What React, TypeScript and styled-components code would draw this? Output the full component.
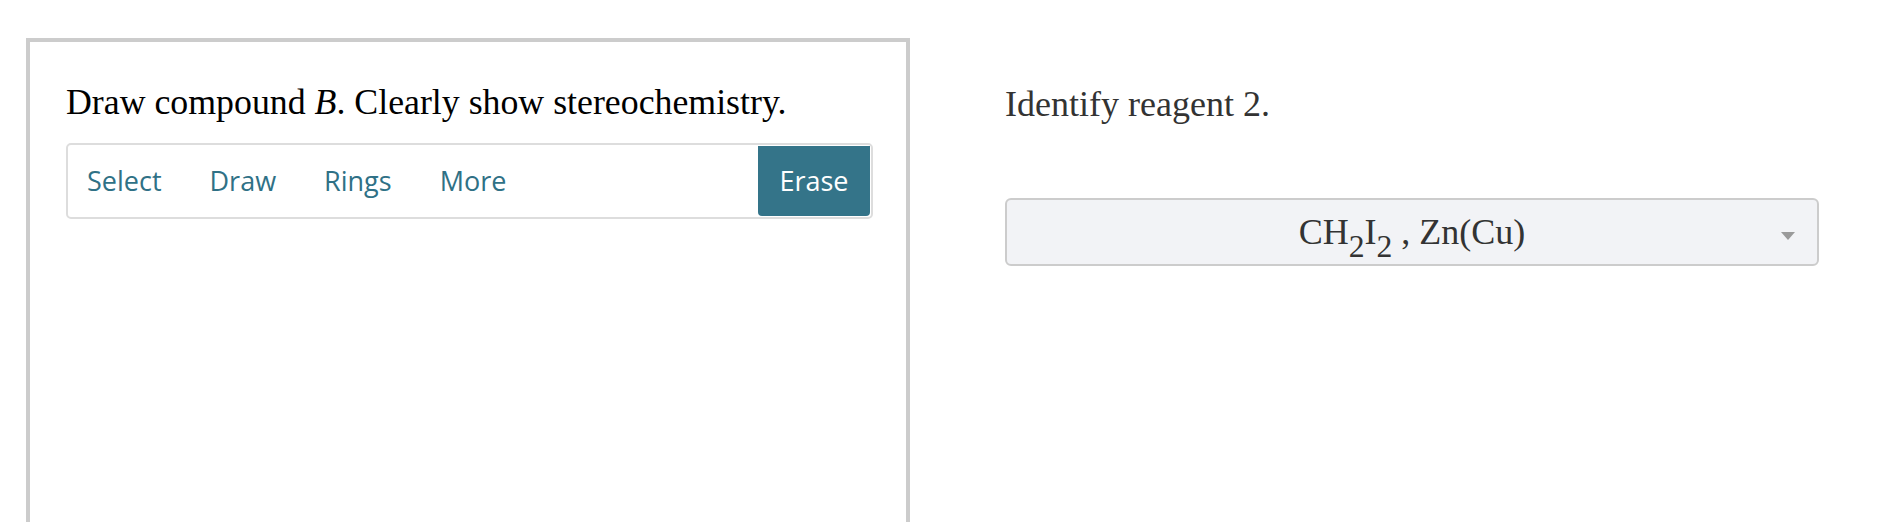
import styled, { createGlobalStyle } from 'styled-components';

const GlobalStyle = createGlobalStyle`
  html, body {
    margin: 0;
    padding: 0;
    background: #ffffff;
    overflow: hidden;
  }
`;

const Page = styled.div`
  display: flex;
  align-items: flex-start;
  gap: 95px;
  padding: 38px 0 0 26px;
  height: 522px;
  box-sizing: border-box;
  overflow: hidden;
`;

const DrawPanel = styled.section`
  width: 884px;
  min-height: 520px;
  box-sizing: border-box;
  border: 4px solid #cccccc;
  padding: 39px 33px 0 36px;
  flex-shrink: 0;
`;

const Prompt = styled.p<{ tone?: string; size?: number }>`
  margin: 0;
  font-family: 'Liberation Serif', 'Times New Roman', serif;
  font-size: ${({ size }) => size ?? 36}px;
  line-height: 1.2;
  color: ${({ tone }) => tone ?? '#000000'};

  em {
    font-style: italic;
  }
`;

const Toolbar = styled.div`
  margin-top: 19px;
  height: 76px;
  box-sizing: border-box;
  border: 2px solid #dddddd;
  border-radius: 5px;
  padding: 1px;
  display: flex;
  align-items: stretch;
`;

const ToolButton = styled.button<{ primary?: boolean }>`
  border: none;
  margin: 0;
  padding: 0 ${({ primary }) => (primary ? 21.5 : 24)}px;
  font-family: 'Open Sans', 'Noto Sans', sans-serif;
  font-size: 27px;
  cursor: pointer;
  background: ${({ primary }) => (primary ? '#347489' : 'transparent')};
  color: ${({ primary }) => (primary ? '#ffffff' : '#2f7186')};
  border-radius: ${({ primary }) => (primary ? '0 0 4px 4px' : '0')};
  margin-left: ${({ primary }) => (primary ? 'auto' : '0')};

  &:first-child {
    padding-left: 18px;
  }
`;

const ReagentColumn = styled.section`
  width: 814px;
  padding-top: 45px;
  flex-shrink: 0;
`;

const Dropdown = styled.div`
  margin-top: 72px;
  height: 68px;
  box-sizing: border-box;
  border: 2px solid #cccccc;
  border-radius: 6px;
  background: #f2f3f6;
  display: flex;
  align-items: center;
  justify-content: center;
  position: relative;
  font-family: 'Liberation Serif', 'Times New Roman', serif;
  font-size: 36px;
  color: #333333;

  sub {
    font-size: 0.88em;
    vertical-align: -0.42em;
    line-height: 0;
  }
`;

const Caret = styled.span`
  position: absolute;
  right: 22px;
  top: 32px;
  width: 0;
  height: 0;
  border-left: 7px solid transparent;
  border-right: 7px solid transparent;
  border-top: 8px solid #9a9a9a;
`;

const tools = ['Select', 'Draw', 'Rings', 'More'];

export default function App() {
  return (
    <>
      <GlobalStyle />
      <Page>
        <DrawPanel>
          <Prompt size={35.8}>
            Draw compound <em>B</em>. Clearly show stereochemistry.
          </Prompt>
          <Toolbar>
            {tools.map((t) => (
              <ToolButton key={t}>{t}</ToolButton>
            ))}
            <ToolButton primary>Erase</ToolButton>
          </Toolbar>
        </DrawPanel>
        <ReagentColumn>
          <Prompt tone="#333333">Identify reagent 2.</Prompt>
          <Dropdown>
            <span>
              CH<sub>2</sub>I<sub>2</sub> , Zn(Cu)
            </span>
            <Caret />
          </Dropdown>
        </ReagentColumn>
      </Page>
    </>
  );
}
